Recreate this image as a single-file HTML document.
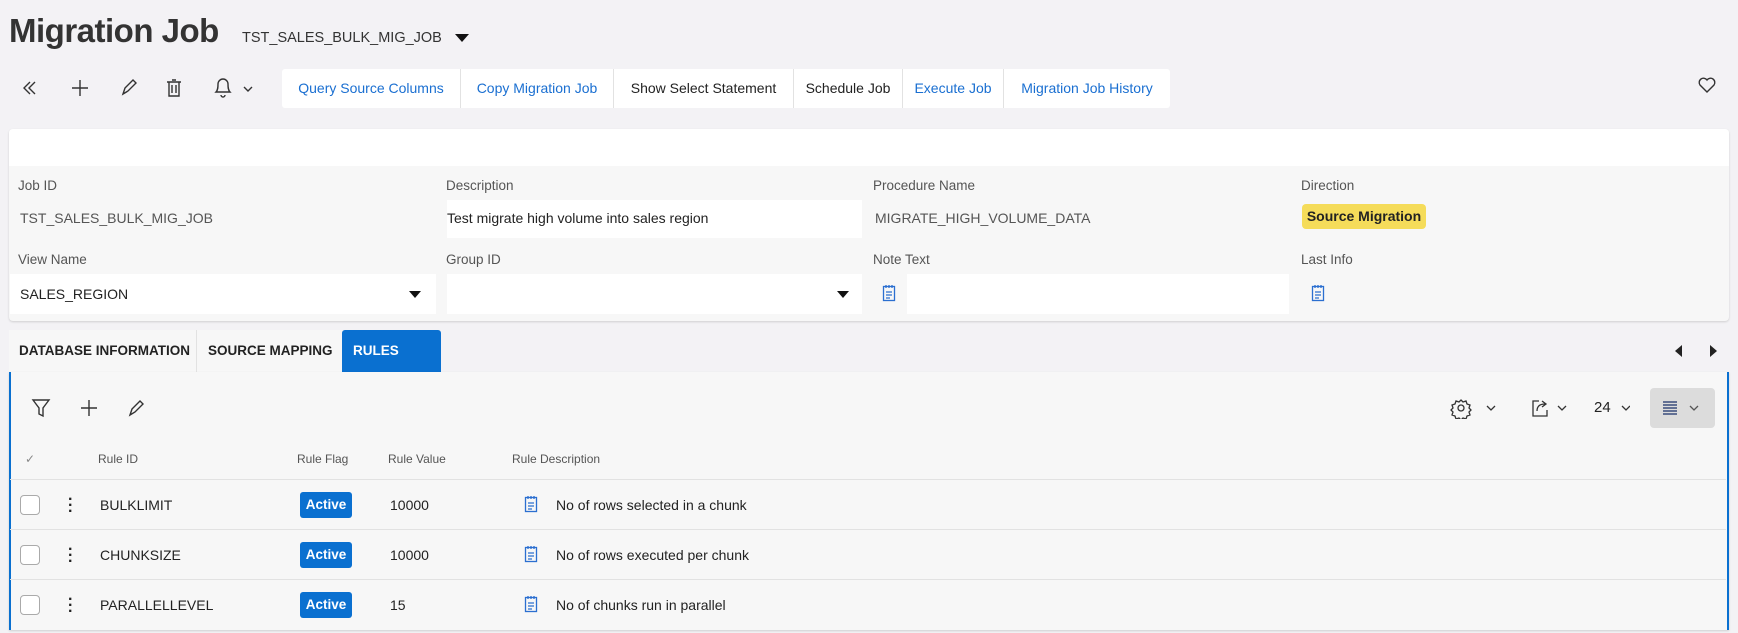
<!DOCTYPE html>
<html><head><meta charset="utf-8"><style>
*{box-sizing:border-box;margin:0;padding:0}
body{width:1738px;height:633px;background:#f3f2f5;font-family:"Liberation Sans",sans-serif;color:#222;position:relative;overflow:hidden;font-size:14px}
.a{position:absolute;white-space:nowrap}
.btn{position:absolute;top:69px;height:39px;background:#fff;border-right:1px solid #e2e2e2;line-height:39px;text-align:center;font-size:14px;color:#1a6fd1}
.lbl{position:absolute;font-size:13.5px;color:#555}
.val{position:absolute;font-size:14px}
.inp{position:absolute;background:#fff}
.tri{position:absolute;width:0;height:0;border-left:6px solid transparent;border-right:6px solid transparent;border-top:7px solid #111}
.hd{position:absolute;top:452px;font-size:12px;color:#555}
.row{position:absolute;left:10px;width:1716px;height:1px;background:#e2e2e2}
.cb{position:absolute;left:20px;width:20px;height:20px;border:1.5px solid #aaa;border-radius:4px;background:#fff}
.dots{position:absolute;left:68px;font-weight:bold;font-size:16px;line-height:6px;width:4px}
.act{position:absolute;left:300px;width:52px;height:26px;background:#0a70d0;color:#fff;border-radius:3px;font-weight:bold;font-size:13.5px;text-align:center;line-height:26px}
.cell{position:absolute;font-size:14px}
</style></head><body>
<div class="a" style="left:9px;top:12px;font-size:33px;font-weight:bold;color:#333;letter-spacing:-0.5px">Migration Job</div>
<div class="a" style="left:242px;top:30px;font-size:14.5px;color:#333">TST_SALES_BULK_MIG_JOB</div>
<div class="tri" style="left:455px;top:34px;border-width:8px 7px 0 7px"></div>

<svg class="a" style="left:18px;top:76px" width="240" height="24" fill="none" stroke="#333" stroke-width="1.4">
<path d="M12 6l-6 6 6 6M17 6l-6 6 6 6"/>
<path d="M62 4v16M54 12h16"/>
<path d="M105 18l2-6 8-8 3 3-8 8z"/>
<path d="M149 6h14M154 4h4M151 6v14h10V6M154 9v8M158 9v8"/>
<path d="M198 16c2-2 2-5 2-8a5 5 0 0110 0c0 3 0 6 2 8zM203 19a2 2 0 004 0"/>
<path d="M226 11l4 4 4-4"/>
</svg>
<div class="btn" style="left:282px;width:179px;border-radius:3px 0 0 3px">Query Source Columns</div>
<div class="btn" style="left:461px;width:153px">Copy Migration Job</div>
<div class="btn" style="left:614px;width:180px;color:#222">Show Select Statement</div>
<div class="btn" style="left:794px;width:109px;color:#222">Schedule Job</div>
<div class="btn" style="left:903px;width:101px">Execute Job</div>
<div class="btn" style="left:1004px;width:166px;border-right:none;border-radius:0 3px 3px 0">Migration Job History</div>
<svg class="a" style="left:1697px;top:76px" width="20" height="18" fill="none" stroke="#333" stroke-width="1.4"><path d="M10 16L3 9a4 4 0 017-5 4 4 0 017 5z"/></svg>

<div class="a" style="left:9px;top:129px;width:1720px;height:192px;background:#f7f7f7;border-radius:4px;box-shadow:0 1px 2px rgba(0,0,0,.15)"></div>
<div class="a" style="left:9px;top:129px;width:1720px;height:37px;background:#fff;border-radius:4px 4px 0 0"></div>

<div class="lbl" style="left:18px;top:178px">Job ID</div>
<div class="val" style="left:20px;top:210px;color:#555">TST_SALES_BULK_MIG_JOB</div>
<div class="lbl" style="left:446px;top:178px">Description</div>
<div class="inp" style="left:447px;top:200px;width:415px;height:38px"></div>
<div class="val" style="left:447px;top:210px">Test migrate high volume into sales region</div>
<div class="lbl" style="left:873px;top:178px">Procedure Name</div>
<div class="val" style="left:875px;top:210px;color:#555">MIGRATE_HIGH_VOLUME_DATA</div>
<div class="lbl" style="left:1301px;top:178px">Direction</div>
<div class="a" style="left:1302px;top:204px;width:124px;height:25px;background:#f5dc5a;border-radius:4px;font-size:14px;font-weight:bold;line-height:25px;text-align:center;color:#222">Source Migration</div>

<div class="lbl" style="left:18px;top:252px">View Name</div>
<div class="inp" style="left:10px;top:274px;width:426px;height:40px"></div>
<div class="val" style="left:20px;top:286px">SALES_REGION</div>
<div class="tri" style="left:409px;top:291px"></div>
<div class="lbl" style="left:446px;top:252px">Group ID</div>
<div class="inp" style="left:447px;top:274px;width:415px;height:40px"></div>
<div class="tri" style="left:837px;top:291px"></div>
<div class="lbl" style="left:873px;top:252px">Note Text</div>
<div class="inp" style="left:907px;top:274px;width:382px;height:40px"></div>
<div class="lbl" style="left:1301px;top:252px">Last Info</div>
<svg class="a" style="left:882px;top:284px" width="14" height="18" fill="none" stroke="#2b6fd0" stroke-width="1.3"><rect x="1.5" y="2.5" width="11" height="14"/><path d="M4 1v3M7 1v3M10 1v3M4 8h6M4 11h6M4 14h4"/></svg>
<svg class="a" style="left:1311px;top:284px" width="14" height="18" fill="none" stroke="#2b6fd0" stroke-width="1.3"><rect x="1.5" y="2.5" width="11" height="14"/><path d="M4 1v3M7 1v3M10 1v3M4 8h6M4 11h6M4 14h4"/></svg>

<div class="a" style="left:9px;top:330px;width:188px;height:42px;background:#f7f7f7;border-right:1px solid #e2e2e2;font-size:13.5px;font-weight:bold;line-height:42px;padding-left:10px">DATABASE INFORMATION</div>
<div class="a" style="left:197px;top:330px;width:145px;height:42px;background:#f7f7f7;font-size:13.5px;font-weight:bold;line-height:42px;padding-left:11px">SOURCE MAPPING</div>
<div class="a" style="left:342px;top:330px;width:99px;height:42px;background:#0a70d0;color:#fff;border-radius:3px 3px 0 0;font-size:13.5px;font-weight:bold;line-height:42px;padding-left:11px">RULES</div>
<div class="a" style="left:1675px;top:345px;width:0;height:0;border-top:6px solid transparent;border-bottom:6px solid transparent;border-right:7px solid #222"></div>
<div class="a" style="left:1710px;top:345px;width:0;height:0;border-top:6px solid transparent;border-bottom:6px solid transparent;border-left:7px solid #222"></div>

<div class="a" style="left:9px;top:372px;width:1720px;height:258px;background:#f7f7f7;border-left:2px solid #0a70d0;border-right:2px solid #0a70d0;box-shadow:0 1px 2px rgba(0,0,0,.15)"></div>
<svg class="a" style="left:30px;top:397px" width="130" height="22" fill="none" stroke="#333" stroke-width="1.4">
<path d="M3 3h16l-6 8v8l-4-2v-6z"/>
<path d="M59 3v16M51 11h16"/>
<path d="M100 18l2-6 8-8 3 3-8 8z"/>
</svg>
<svg class="a" style="left:1450px;top:397px" width="180" height="22" fill="none" stroke="#333" stroke-width="1.3">
<circle cx="11" cy="11" r="3"/><path d="M11 3l2 2 3-1 1 3 3 1-1 3 2 2-2 2 1 3-3 1-1 3-3-1-2 2-2-2-3 1-1-3-3-1 1-3-2-2 2-2-1-3 3-1 1-3 3 1z"/>
<path d="M37 9l4 4 4-4"/>
<path d="M89 4h-6v15h14v-6M87 14c0-5 3-7 8-7M92 4l4 3-4 3"/>
<path d="M108 9l4 4 4-4"/>
<path d="M172 9l4 4 4-4"/>
</svg>
<div class="a" style="left:1594px;top:399px;font-size:15px">24</div>
<div class="a" style="left:1650px;top:388px;width:65px;height:40px;background:#dcdcdc;border-radius:4px"></div>
<svg class="a" style="left:1660px;top:398px" width="50" height="20" fill="none" stroke="#1a2f6a" stroke-width="1.3"><path d="M3 4h14M3 7h14M3 10h14M3 13h14M3 16h14"/><path d="M30 8l4 4 4-4" stroke="#555"/></svg>

<div class="hd" style="left:25px;color:#888">✓</div>
<div class="hd" style="left:98px">Rule ID</div>
<div class="hd" style="left:297px">Rule Flag</div>
<div class="hd" style="left:388px">Rule Value</div>
<div class="hd" style="left:512px">Rule Description</div>
<div class="row" style="top:479px"></div>
<div class="row" style="top:529px"></div>
<div class="row" style="top:579px"></div>

<div class="cb" style="top:495px"></div><div class="dots" style="top:497px">·<br>·<br>·</div>
<div class="cell" style="left:100px;top:497px">BULKLIMIT</div><div class="act" style="top:492px">Active</div>
<div class="cell" style="left:390px;top:497px">10000</div><div class="cell" style="left:556px;top:497px">No of rows selected in a chunk</div>
<div class="cb" style="top:545px"></div><div class="dots" style="top:547px">·<br>·<br>·</div>
<div class="cell" style="left:100px;top:547px">CHUNKSIZE</div><div class="act" style="top:542px">Active</div>
<div class="cell" style="left:390px;top:547px">10000</div><div class="cell" style="left:556px;top:547px">No of rows executed per chunk</div>
<div class="cb" style="top:595px"></div><div class="dots" style="top:597px">·<br>·<br>·</div>
<div class="cell" style="left:100px;top:597px">PARALLELLEVEL</div><div class="act" style="top:592px">Active</div>
<div class="cell" style="left:390px;top:597px">15</div><div class="cell" style="left:556px;top:597px">No of chunks run in parallel</div>
<svg class="a" style="left:524px;top:495px" width="14" height="118" fill="none" stroke="#2b6fd0" stroke-width="1.3">
<g><rect x="1.5" y="2.5" width="11" height="14"/><path d="M4 1v3M7 1v3M10 1v3M4 8h6M4 11h6M4 14h4"/></g>
<g transform="translate(0,50)"><rect x="1.5" y="2.5" width="11" height="14"/><path d="M4 1v3M7 1v3M10 1v3M4 8h6M4 11h6M4 14h4"/></g>
<g transform="translate(0,100)"><rect x="1.5" y="2.5" width="11" height="14"/><path d="M4 1v3M7 1v3M10 1v3M4 8h6M4 11h6M4 14h4"/></g>
</svg>
</body></html>
